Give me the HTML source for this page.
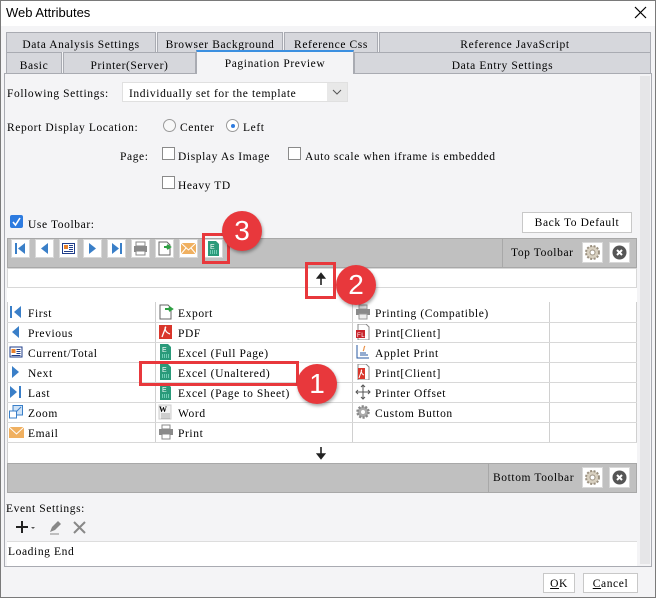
<!DOCTYPE html>
<html><head><meta charset="utf-8"><style>
*{margin:0;padding:0;box-sizing:border-box}
body{width:656px;height:598px;background:#f4f4f6;position:relative;overflow:hidden;font-family:"Liberation Serif",serif;font-size:11.5px;letter-spacing:0.6px;color:#000}
.a{position:absolute}
.t{position:absolute;white-space:nowrap;line-height:12px;margin-top:2px}
.tab{position:absolute;background:#d6d7dc;border:1px solid #a9abb2;border-bottom:none;text-align:center;line-height:18px;padding-top:3px}
.cb{position:absolute;width:13px;height:13px;border:1px solid #8a8a8a;background:#fff}
.tb{position:absolute;width:19px;height:19px;background:#fff;border:1px solid #d8d8d8}
.rb{position:absolute;border:3px solid #e8383c}
.rc{position:absolute;width:40px;height:40px;border-radius:50%;background:#e8383c;color:#fff;font-family:"Liberation Sans",sans-serif;font-size:28px;letter-spacing:0;text-align:center;line-height:40px;box-shadow:1px 2px 3px rgba(0,0,0,.35)}
.btn{position:absolute;background:#fff;border:1px solid #c8c8c8;text-align:center;line-height:18px;padding-top:1px}
</style></head><body>
<div class="a" style="left:0;top:0;width:656px;height:598px;border:1px solid #7a7a7a"></div>
<div class="a" style="left:1px;top:1px;width:654px;height:25px;background:#fff"></div>
<div class="a" style="left:6px;top:6px;font-family:'Liberation Sans',sans-serif;font-size:13px;letter-spacing:0;line-height:14px">Web Attributes</div>
<svg class="a" style="left:634px;top:6px" width="13" height="13"><path d="M1 1L12 12M12 1L1 12" stroke="#000" stroke-width="1.2"/></svg>

<div class="tab" style="left:6px;top:32px;width:150px;height:20px">Data Analysis Settings</div>
<div class="tab" style="left:157px;top:32px;width:126px;height:20px">Browser Background</div>
<div class="tab" style="left:284px;top:32px;width:94px;height:20px">Reference Css</div>
<div class="tab" style="left:379px;top:32px;width:272px;height:20px">Reference JavaScript</div>
<div class="tab" style="left:6px;top:52px;width:56px;height:22px;line-height:20px">Basic</div>
<div class="tab" style="left:63px;top:52px;width:133px;height:22px;line-height:20px">Printer(Server)</div>
<div class="tab" style="left:354px;top:52px;width:297px;height:22px;line-height:20px">Data Entry Settings</div>
<div class="tab" style="left:196px;top:50px;width:158px;height:24px;background:#f4f4f6;border-top:2px solid #3b8fe0;line-height:18px;z-index:2">Pagination Preview</div>

<div class="a" style="left:4px;top:73px;width:648px;height:494px;border:1px solid #a9abb2"></div>
<div class="a" style="left:640px;top:76px;width:10px;height:488px;background:#e6e6e8"></div>

<div class="t" style="left:7px;top:86px">Following Settings:</div>
<div class="a" style="left:122px;top:82px;width:226px;height:20px;background:#fff;border:1px solid #e0e0e0"></div>
<div class="a" style="left:327px;top:83px;width:20px;height:18px;background:#e8e8e8"></div>
<div class="t" style="left:129px;top:86px">Individually set for the template</div>
<svg class="a" style="left:332px;top:88px" width="10" height="8"><path d="M1 2L5 6L9 2" stroke="#555" fill="none"/></svg>

<div class="t" style="left:7px;top:120px">Report Display Location:</div>
<div class="a" style="left:163px;top:119px;width:13px;height:13px;border-radius:50%;border:1px solid #999;background:#f8f8f8"></div>
<div class="t" style="left:180px;top:120px">Center</div>
<div class="a" style="left:226px;top:119px;width:13px;height:13px;border-radius:50%;border:1px solid #999;background:#fff"></div>
<div class="a" style="left:231px;top:124px;width:4px;height:4px;border-radius:50%;background:#2d7be0"></div>
<div class="t" style="left:243px;top:120px">Left</div>

<div class="t" style="left:120px;top:149px">Page:</div>
<div class="cb" style="left:162px;top:147px"></div>
<div class="t" style="left:178px;top:149px">Display As Image</div>
<div class="cb" style="left:288px;top:147px"></div>
<div class="t" style="left:305px;top:149px">Auto scale when iframe is embedded</div>
<div class="cb" style="left:162px;top:176px"></div>
<div class="t" style="left:178px;top:178px">Heavy TD</div>

<div class="a" style="left:10px;top:215px;width:13px;height:13px;background:#2d7be0;border-radius:2px"></div>
<svg class="a" style="left:10px;top:215px" width="13" height="13"><path d="M3 7L5.5 10L10 3" stroke="#fff" stroke-width="1.6" fill="none"/></svg>
<div class="t" style="left:28px;top:217px">Use Toolbar:</div>
<div class="btn" style="left:522px;top:212px;width:110px;height:21px">Back To Default</div>

<div class="a" style="left:7px;top:238px;width:630px;height:30px;background:#c0c0c0;border:1px solid #a8a8a8"></div>
<div class="a" style="left:502px;top:238px;width:1px;height:30px;background:#a8a8a8"></div>
<div class="tb" style="left:11px;top:239px"><svg width="17" height="17"><rect x="3" y="3" width="2" height="11" fill="#3a7fc8"/><path d="M13 3L6 8.5L13 14Z" fill="#3a7fc8"/></svg></div>
<div class="tb" style="left:35px;top:239px"><svg width="17" height="17"><path d="M12 3L5 8.5L12 14Z" fill="#3a7fc8"/></svg></div>
<div class="tb" style="left:59px;top:239px"><svg width="17" height="17"><rect x="2.5" y="3.5" width="12" height="10" fill="#fff" stroke="#1f3d8a"/><rect x="4" y="5" width="4" height="4" fill="#e8802a"/><path d="M9 5.5h4M9 7.5h4M9 9.5h4M4 11.5h9" stroke="#1f3d8a"/></svg></div>
<div class="tb" style="left:83px;top:239px"><svg width="17" height="17"><path d="M5 3L12 8.5L5 14Z" fill="#3a7fc8"/></svg></div>
<div class="tb" style="left:107px;top:239px"><svg width="17" height="17"><path d="M4 3L11 8.5L4 14Z" fill="#3a7fc8"/><rect x="12" y="3" width="2" height="11" fill="#3a7fc8"/></svg></div>
<div class="tb" style="left:131px;top:239px"><svg width="17" height="17"><rect x="4" y="2" width="9" height="4" fill="#fff" stroke="#888"/><rect x="2" y="6" width="13" height="6" fill="#8a8a8a"/><rect x="4" y="11" width="9" height="4" fill="#fff" stroke="#888"/></svg></div>
<div class="tb" style="left:155px;top:239px"><svg width="17" height="17"><path d="M3 2h8l3 3v10H3Z" fill="#fff" stroke="#666"/><path d="M8 7h5M11 5l3 2-3 2" stroke="#2ea043" stroke-width="2" fill="none"/></svg></div>
<div class="tb" style="left:179px;top:239px"><svg width="17" height="17"><rect x="1" y="3" width="15" height="11" fill="#f0b060"/><path d="M1 3L8.5 10L16 3M1 14L6 8M16 14L11 8" stroke="#fff" fill="none"/></svg></div>
<div class="tb" style="left:204px;top:239px"><svg width="17" height="17"><path d="M3 1h8l3 3v12H3Z" fill="#2a9a7a"/><text x="5" y="9" fill="#fff" font-size="7" font-family="Liberation Sans">E</text><path d="M5 11h7M5 13h7" stroke="#bfe" stroke-dasharray="1 1"/></svg></div>
<div class="t" style="left:511px;top:245px">Top Toolbar</div>
<div class="tb" style="left:582px;top:242px;width:21px;height:21px"><svg width="19" height="19"><circle cx="9.5" cy="9.5" r="6.5" fill="#d8d0c0" stroke="#9a9080" stroke-dasharray="2 1.5" stroke-width="2"/><circle cx="9.5" cy="9.5" r="2.5" fill="#fff" stroke="#9a9080"/></svg></div>
<div class="tb" style="left:609px;top:242px;width:21px;height:21px"><svg width="19" height="19"><circle cx="9.5" cy="9.5" r="7" fill="#555"/><path d="M7 7L12 12M12 7L7 12" stroke="#fff" stroke-width="2"/></svg></div>

<div class="a" style="left:7px;top:268px;width:630px;height:20px;background:#fff;border:1px solid #d8d8d8"></div>
<svg class="a" style="left:316px;top:272px" width="10" height="14"><path d="M5 13V3M1.5 6L5 1.5L8.5 6Z" stroke="#222" stroke-width="1.6" fill="#222"/></svg>
<div class="a" style="left:7px;top:288px;width:630px;height:14px;background:#fff"></div>

<div class="a" style="left:7px;top:302px;width:630px;height:140px;background:#fff;border-left:1px solid #d0d0d0"></div>
<div class="a" style="left:155px;top:302px;width:1px;height:140px;background:#d0d0d0"></div>
<div class="a" style="left:352px;top:302px;width:1px;height:140px;background:#d0d0d0"></div>
<div class="a" style="left:549px;top:302px;width:1px;height:140px;background:#d0d0d0"></div>
<div class="a" style="left:636px;top:302px;width:1px;height:160px;background:#d0d0d0"></div>
<div class="a" style="left:7px;top:322px;width:630px;height:1px;background:#d8d8d8"></div>
<div class="a" style="left:7px;top:342px;width:630px;height:1px;background:#d8d8d8"></div>
<div class="a" style="left:7px;top:362px;width:630px;height:1px;background:#d8d8d8"></div>
<div class="a" style="left:7px;top:382px;width:630px;height:1px;background:#d8d8d8"></div>
<div class="a" style="left:7px;top:402px;width:630px;height:1px;background:#d8d8d8"></div>
<div class="a" style="left:7px;top:422px;width:630px;height:1px;background:#d8d8d8"></div>
<div class="a" style="left:7px;top:442px;width:630px;height:1px;background:#d8d8d8"></div>

<svg class="a" style="left:9px;top:305px" width="14" height="14"><rect x="1" y="1" width="2" height="12" fill="#3a7fc8"/><path d="M12 1L5 7L12 13Z" fill="#3a7fc8"/></svg>
<svg class="a" style="left:9px;top:325px" width="14" height="14"><path d="M10 1L3 7L10 13Z" fill="#3a7fc8"/></svg>
<svg class="a" style="left:9px;top:345px" width="14" height="14"><rect x="1" y="2" width="12" height="10" fill="#fff" stroke="#1f3d8a"/><rect x="2.5" y="4" width="4" height="4" fill="#e8802a"/><path d="M7.5 4.5h4M7.5 6.5h4M7.5 8.5h4M2.5 10.5h9" stroke="#1f3d8a"/></svg>
<svg class="a" style="left:9px;top:365px" width="14" height="14"><path d="M3 1L10 7L3 13Z" fill="#3a7fc8"/></svg>
<svg class="a" style="left:9px;top:385px" width="14" height="14"><path d="M1 1L8 7L1 13Z" fill="#3a7fc8"/><rect x="10" y="1" width="2" height="12" fill="#3a7fc8"/></svg>
<svg class="a" style="left:9px;top:405px" width="14" height="14"><rect x="4" y="0.5" width="9.5" height="9.5" fill="#cfe3f7" stroke="#3a7fc8"/><rect x="0.5" y="6" width="7" height="7" fill="#fff" stroke="#3a7fc8"/><path d="M7 7L12 2" stroke="#3a7fc8"/></svg>
<svg class="a" style="left:9px;top:425px" width="15" height="14"><rect x="0" y="2" width="15" height="11" fill="#f0b060"/><path d="M0 2L7.5 9L15 2" stroke="#fff" fill="none"/></svg>
<div class="t" style="left:28px;top:306px">First</div>
<div class="t" style="left:28px;top:326px">Previous</div>
<div class="t" style="left:28px;top:346px">Current/Total</div>
<div class="t" style="left:28px;top:366px">Next</div>
<div class="t" style="left:28px;top:386px">Last</div>
<div class="t" style="left:28px;top:406px">Zoom</div>
<div class="t" style="left:28px;top:426px">Email</div>

<svg class="a" style="left:158px;top:304px" width="16" height="16"><path d="M2 1h8l3 3v11H2Z" fill="#fff" stroke="#666"/><path d="M7 5h6M11 3l3 2-3 2" stroke="#2ea043" stroke-width="2" fill="none"/></svg>
<svg class="a" style="left:158px;top:324px" width="16" height="16"><rect x="1" y="1" width="13" height="14" fill="#d9362b"/><path d="M4 13C7 5 8 3 7.5 3S6 8 12 10" stroke="#fff" fill="none" stroke-width="1.3"/></svg>
<svg class="a" style="left:158px;top:344px" width="16" height="16"><path d="M2 0h8l3 3v13H2Z" fill="#2a9a7a"/><text x="4" y="8" fill="#fff" font-size="7" font-family="Liberation Sans">E</text><path d="M4 11h7M4 13h7" stroke="#bfe" stroke-dasharray="1 1"/></svg>
<svg class="a" style="left:158px;top:364px" width="16" height="16"><path d="M2 0h8l3 3v13H2Z" fill="#2a9a7a"/><text x="4" y="8" fill="#fff" font-size="7" font-family="Liberation Sans">E</text><path d="M4 11h7M4 13h7" stroke="#bfe" stroke-dasharray="1 1"/></svg>
<svg class="a" style="left:158px;top:384px" width="16" height="16"><path d="M2 0h8l3 3v13H2Z" fill="#2a9a7a"/><text x="4" y="8" fill="#fff" font-size="7" font-family="Liberation Sans">E</text><path d="M4 11h7M4 13h7" stroke="#bfe" stroke-dasharray="1 1"/></svg>
<svg class="a" style="left:158px;top:404px" width="16" height="16"><rect x="1" y="1" width="12" height="14" fill="#f2f2f2" stroke="#ccc"/><text x="1" y="8" font-size="8" font-weight="bold" font-family="Liberation Serif">W</text><path d="M3 10h9M3 12h9M3 14h9" stroke="#aaa"/></svg>
<svg class="a" style="left:158px;top:424px" width="16" height="16"><rect x="4" y="1" width="8" height="4" fill="#fff" stroke="#888"/><rect x="1" y="5" width="14" height="6" fill="#8a8a8a"/><rect x="4" y="10" width="8" height="5" fill="#fff" stroke="#888"/></svg>
<div class="t" style="left:178px;top:306px">Export</div>
<div class="t" style="left:178px;top:326px">PDF</div>
<div class="t" style="left:178px;top:346px">Excel (Full Page)</div>
<div class="t" style="left:178px;top:366px">Excel (Unaltered)</div>
<div class="t" style="left:178px;top:386px">Excel (Page to Sheet)</div>
<div class="t" style="left:178px;top:406px">Word</div>
<div class="t" style="left:178px;top:426px">Print</div>

<svg class="a" style="left:355px;top:304px" width="16" height="16"><rect x="4" y="1" width="8" height="4" fill="#ddd" stroke="#999"/><rect x="1" y="5" width="14" height="6" fill="#8a8a8a"/><rect x="4" y="10" width="8" height="5" fill="#eee" stroke="#999"/></svg>
<svg class="a" style="left:355px;top:324px" width="16" height="16"><path d="M3 0h8l3 3v13H3Z" fill="#fff" stroke="#888"/><rect x="1" y="6" width="9" height="8" fill="#c8252c"/><text x="2" y="13" fill="#fff" font-size="6" font-family="Liberation Sans">FL</text></svg>
<svg class="a" style="left:355px;top:344px" width="16" height="16"><path d="M2 1v13h12" stroke="#2a5aa0" fill="none"/><path d="M5 11h8M5 9h6" stroke="#2a5aa0"/><path d="M8 7c2-2 0-3 2-5" stroke="#e8802a" fill="none"/></svg>
<svg class="a" style="left:355px;top:364px" width="16" height="16"><path d="M3 0h8l3 3v13H3Z" fill="#fff" stroke="#888"/><rect x="3" y="4" width="7" height="11" fill="#d9362b"/><path d="M4 14C6 8 7 6 6.5 6S6 10 9 11" stroke="#fff" fill="none"/></svg>
<svg class="a" style="left:355px;top:384px" width="16" height="16"><path d="M8 1v14M1 8h14M6 3l2-2 2 2M6 13l2 2 2-2M3 6L1 8l2 2M13 6l2 2-2 2" stroke="#555" fill="none"/></svg>
<svg class="a" style="left:355px;top:404px" width="16" height="16"><circle cx="8" cy="8" r="5.5" fill="#aaa" stroke="#888" stroke-width="2.5" stroke-dasharray="2 1.5"/><circle cx="8" cy="8" r="2" fill="#fff"/></svg>
<div class="t" style="left:375px;top:306px">Printing (Compatible)</div>
<div class="t" style="left:375px;top:326px">Print[Client]</div>
<div class="t" style="left:375px;top:346px">Applet Print</div>
<div class="t" style="left:375px;top:366px">Print[Client]</div>
<div class="t" style="left:375px;top:386px">Printer Offset</div>
<div class="t" style="left:375px;top:406px">Custom Button</div>

<div class="a" style="left:7px;top:443px;width:630px;height:20px;background:#fff;border-left:1px solid #d0d0d0"></div>
<svg class="a" style="left:316px;top:446px" width="10" height="14"><path d="M5 1V11M1.5 8L5 12.5L8.5 8Z" stroke="#222" stroke-width="1.6" fill="#222"/></svg>

<div class="a" style="left:7px;top:463px;width:630px;height:30px;background:#c0c0c0;border:1px solid #a8a8a8"></div>
<div class="a" style="left:488px;top:463px;width:1px;height:30px;background:#a8a8a8"></div>
<div class="t" style="left:493px;top:470px">Bottom Toolbar</div>
<div class="tb" style="left:582px;top:467px;width:21px;height:21px"><svg width="19" height="19"><circle cx="9.5" cy="9.5" r="6.5" fill="#d8d0c0" stroke="#9a9080" stroke-dasharray="2 1.5" stroke-width="2"/><circle cx="9.5" cy="9.5" r="2.5" fill="#fff" stroke="#9a9080"/></svg></div>
<div class="tb" style="left:609px;top:467px;width:21px;height:21px"><svg width="19" height="19"><circle cx="9.5" cy="9.5" r="7" fill="#555"/><path d="M7 7L12 12M12 7L7 12" stroke="#fff" stroke-width="2"/></svg></div>

<div class="t" style="left:6px;top:501px">Event Settings:</div>
<svg class="a" style="left:12px;top:518px" width="80" height="18"><path d="M4 9h12M10 3v12" stroke="#222" stroke-width="2"/><path d="M19 9l2 2 2-2" fill="#555"/><path d="M38 14l2-5 6-6 3 3-6 6Z" fill="#888"/><path d="M38 16h9" stroke="#888"/><path d="M62 4L73 15M73 4L62 15" stroke="#888" stroke-width="2"/></svg>
<div class="a" style="left:7px;top:541px;width:630px;height:25px;background:#fff;border-top:1px solid #ddd"></div>
<div class="t" style="left:8px;top:544px">Loading End</div>

<div class="btn" style="left:543px;top:573px;width:32px;height:20px"><u>O</u>K</div>
<div class="btn" style="left:583px;top:573px;width:55px;height:20px"><u>C</u>ancel</div>

<div class="rb" style="left:202px;top:233px;width:28px;height:31px"></div>
<div class="rc" style="left:222px;top:211px">3</div>
<div class="rb" style="left:305px;top:262px;width:31px;height:37px"></div>
<div class="rc" style="left:336px;top:265px">2</div>
<div class="rb" style="left:139px;top:361px;width:160px;height:25px"></div>
<div class="rc" style="left:297px;top:364px">1</div>
</body></html>
